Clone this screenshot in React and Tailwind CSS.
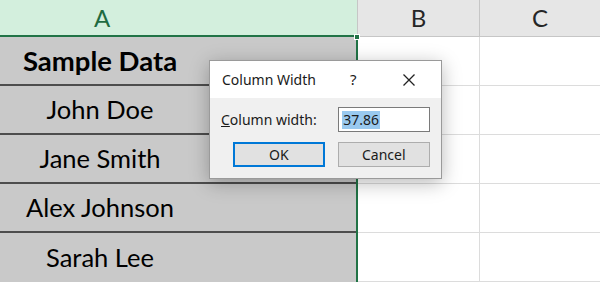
import React from "react";

const rows = ["Sample Data", "John Doe", "Jane Smith", "Alex Johnson", "Sarah Lee"];

export default function App() {
  return (
    <div className="relative w-[600px] h-[282px] overflow-hidden bg-white" style={{ fontFamily: "Lato, 'Open Sans', sans-serif" }}>
      {/* header */}
      <div className="flex h-[37px]">
        <div className="w-[358px] h-full bg-[#d3efdd] border-b-2 border-[#217346] border-r border-r-[#c6c6c6] flex items-center">
          <div className="w-[204px] text-center text-[24px] text-[#1f6b41] leading-none">A</div>
        </div>
        <div className="w-[122px] h-full bg-[#e6e6e6] border-b border-[#c6c6c6] border-r border-r-[#c6c6c6] flex items-center justify-center text-[24px] text-[#262626] leading-none">B</div>
        <div className="flex-1 h-full bg-[#e6e6e6] border-b border-[#c6c6c6] flex items-center justify-center text-[24px] text-[#262626] leading-none">C</div>
      </div>
      {/* body */}
      <div className="flex">
        <div className="w-[358px] border-r-2 border-[#217346] bg-[#c9c9c9]">
          {rows.map((r, i) => (
            <div key={r} className={`h-[49px] flex items-center ${i < 4 ? "border-b-2 border-[#4d4d4d]" : ""}`}>
              <div className={`w-[200px] text-center text-black ${i === 0 ? "font-bold text-[27.5px]" : "text-[25.5px]"}`}>{r}</div>
            </div>
          ))}
        </div>
        <div className="w-[122px] border-r border-[#dcdcdc]">
          {rows.map((r) => (
            <div key={r} className="h-[49px] border-b border-[#dcdcdc]" />
          ))}
        </div>
        <div className="flex-1">
          {rows.map((r) => (
            <div key={r} className="h-[49px] border-b border-[#dcdcdc]" />
          ))}
        </div>
      </div>
      {/* selection handle */}
      <div className="absolute left-[354px] top-[34px] w-[6px] h-[6px] bg-[#217346] border border-white" />

      {/* dialog */}
      <div
        className="absolute left-[209px] top-[60px] w-[233px] h-[119px] bg-[#f0f0f0] border border-[#9a9a9a] shadow-[0_4px_18px_rgba(0,0,0,0.28)]"
        style={{ fontFamily: "'Noto Sans', 'Open Sans', sans-serif" }}
      >
        <div className="h-[37px] bg-white flex items-center text-[14px] text-[#1a1a1a]">
          <span className="ml-[12px]">Column Width</span>
          <span className="ml-[34px] text-[15px]">?</span>
          <svg className="ml-[46px]" width="14" height="14" viewBox="0 0 14 14">
            <path d="M1.5 1.5 L12.5 12.5 M12.5 1.5 L1.5 12.5" stroke="#222" strokeWidth="1.3" />
          </svg>
        </div>
        <div className="pt-[9px] px-[11px]">
          <div className="flex items-center">
            <span className="text-[14px] text-[#1a1a1a] w-[119px]">
              <span className="underline">C</span>olumn width:
            </span>
            <div className="w-[93px] h-[25px] bg-white border border-[#7a7a7a] flex items-center pl-[3px]">
              <span className="bg-[#99c9ef] text-[14px] text-[#1a1a1a] leading-[18px] px-[1px]">37.86</span>
            </div>
          </div>
          <div className="flex mt-[10px]">
            <button className="ml-[12px] w-[93px] h-[25px] bg-[#e1e1e1] border-2 border-[#0078d7] text-[14px] text-[#1a1a1a] flex items-center justify-center">OK</button>
            <button className="ml-[13px] w-[94px] h-[25px] bg-[#e1e1e1] border border-[#adadad] text-[14px] text-[#1a1a1a] flex items-center justify-center">Cancel</button>
          </div>
        </div>
      </div>
    </div>
  );
}
